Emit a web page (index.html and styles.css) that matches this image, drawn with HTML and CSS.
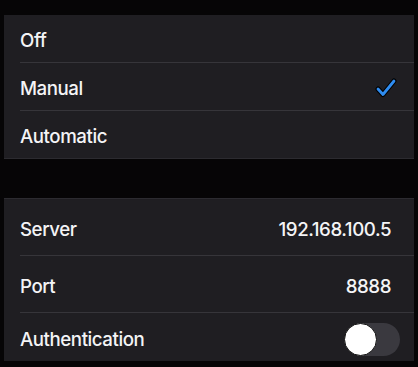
FILE: index.html
```html
<!DOCTYPE html>
<html>
<head>
<meta charset="utf-8">
<link rel="stylesheet" href="styles.css">
</head>
<body>
<div class="page">
  <div class="card card-modes">
    <div class="row"><span class="label">Off</span></div>
    <div class="row"><span class="label">Manual</span>
      <svg class="check" width="22" height="20" viewBox="0 0 22 20">
        <path d="M3 11 L8 16.5 L19 3" fill="none" stroke="#000" stroke-width="5" stroke-linecap="round" stroke-linejoin="round"/>
        <path d="M3 11 L8 16.5 L19 3" fill="none" stroke="#2f8cf0" stroke-width="2.8" stroke-linecap="round" stroke-linejoin="round"/>
      </svg>
    </div>
    <div class="row"><span class="label">Automatic</span></div>
  </div>
  <div class="card card-server">
    <div class="row tall"><span class="label">Server</span><span class="value">192.168.100.5</span></div>
    <div class="row tall"><span class="label">Port</span><span class="value">8888</span></div>
    <div class="row"><span class="label">Authentication</span>
      <div class="toggle"><div class="knob"></div></div>
    </div>
  </div>
</div>
</body>
</html>
```
FILE: styles.css
```css
html, body {
  margin: 0;
  padding: 0;
  background: #060506;
}
body {
  font-family: Inter, "Noto Sans", sans-serif;
  color: #f4f4f6;
  font-size: 18.7px;
  font-weight: 500;
  letter-spacing: -0.45px;
}
.page {
  display: flex;
  flex-direction: column;
  gap: 39px;
  padding: 15px 4px 0 4px;
  width: 410px;
}
.card {
  background: #1f1e22;
  display: flex;
  flex-direction: column;
  padding-left: 16px;
  border-bottom: 1px solid #2c2b30;
}
.card-server {
  border-top: 1px solid #2c2b30;
  border-bottom: none;
}
.row {
  height: 48px;
  display: flex;
  align-items: center;
  justify-content: space-between;
  padding-right: 17px;
  border-bottom: 1px solid #36353a;
  box-sizing: border-box;
}
.row:last-child {
  border-bottom: none;
}
.card-modes .row:last-child { height: 47px; }
.row.tall {
  height: 57px;
}
.label, .value {
  padding-top: 4px;
}
.value {
  color: #f4f4f6;
  padding-right: 6px;
}
.check {
  margin-top: 2px;
}
.toggle {
  width: 55px;
  height: 33px;
  border-radius: 17px;
  background: #3a393f;
  position: relative;
  margin-right: -3px;
  margin-top: 4px;
}
.knob {
  position: absolute;
  left: -1px;
  top: 0px;
  width: 31px;
  height: 31px;
  border-radius: 50%;
  background: #ffffff;
  border: 1px solid #111;
}
```
